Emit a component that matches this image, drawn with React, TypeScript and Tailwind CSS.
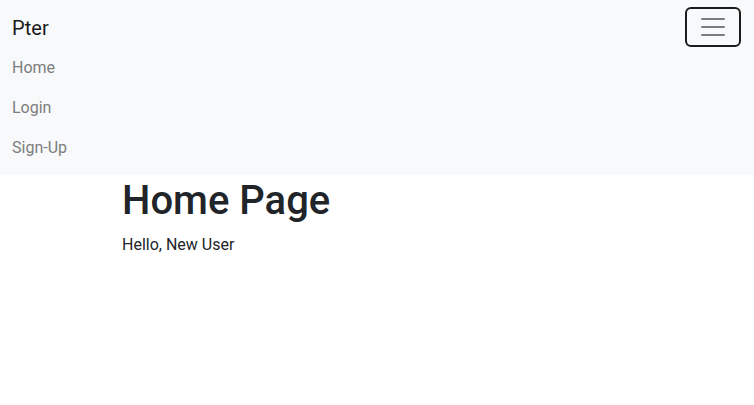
export default function App() {
  return (
    <div className="min-h-[405px] bg-white text-[#212529]" style={{ fontFamily: 'Roboto, "Noto Sans", sans-serif' }}>
      <nav className="bg-[#f8f9fa] px-3 pt-2 pb-[7px]">
        <div className="flex items-center justify-between h-[40px]">
          <a className="text-[20px] leading-[30px] text-[#1a1a1a]">Pter</a>
          <button className="w-[56px] h-[40px] -mt-[2px] mr-[1px] border-2 border-[#1b1b1b] rounded-[6px] flex items-center justify-center">
            <svg width="30" height="30" viewBox="0 0 30 30">
              <path d="M4 7h22M4 15h22M4 23h22" stroke="rgba(0,0,0,0.5)" strokeWidth="2" strokeLinecap="round" />
            </svg>
          </button>
        </div>
        <ul className="flex flex-col">
          <li className="py-2 text-[16px] leading-[24px] text-[#7c7d7e]">Home</li>
          <li className="py-2 text-[16px] leading-[24px] text-[#7c7d7e]">Login</li>
          <li className="py-2 text-[16px] leading-[24px] text-[#7c7d7e]">Sign-Up</li>
        </ul>
      </nav>
      <div className="w-[540px] mx-auto px-3">
        <h1 className="text-[40px] leading-[48px] font-medium mb-2 pt-[2px] pl-[3px]">Home Page</h1>
        <p className="text-[16px] leading-[24px] pl-[3px]">Hello, New User</p>
      </div>
    </div>
  );
}
